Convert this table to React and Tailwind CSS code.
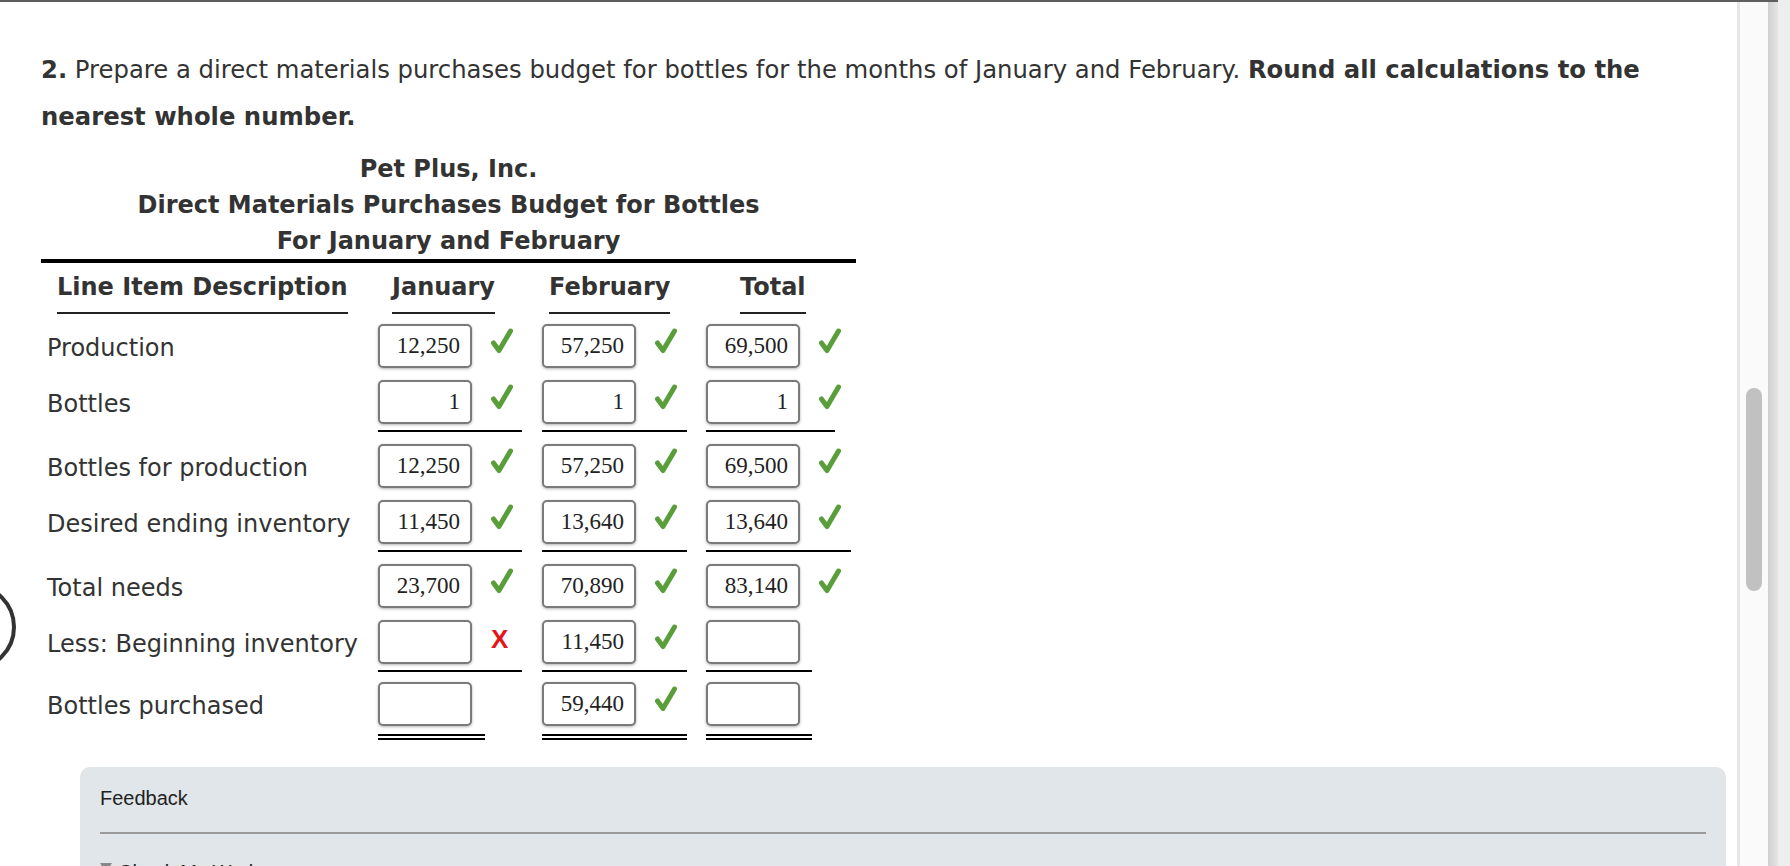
import React from 'react'

const rows = [
  { label: 'Production', vals: ['12,250', '57,250', '69,500'], marks: ['ok', 'ok', 'ok'] },
  { label: 'Bottles', vals: ['1', '1', '1'], marks: ['ok', 'ok', 'ok'], line: 'single', widths: [144, 145, 129] },
  { label: 'Bottles for production', vals: ['12,250', '57,250', '69,500'], marks: ['ok', 'ok', 'ok'] },
  { label: 'Desired ending inventory', vals: ['11,450', '13,640', '13,640'], marks: ['ok', 'ok', 'ok'], line: 'single', widths: [144, 145, 145] },
  { label: 'Total needs', vals: ['23,700', '70,890', '83,140'], marks: ['ok', 'ok', 'ok'] },
  { label: 'Less: Beginning inventory', vals: ['', '11,450', ''], marks: ['x', 'ok', null], line: 'single', widths: [144, 145, 106], tight: true },
  { label: 'Bottles purchased', vals: ['', '59,440', ''], marks: [null, 'ok', null], line: 'double', widths: [107, 145, 106] },
]

const cellW = ['w-[164px]', 'w-[164px]', 'w-[150px]']

const Check = () => (
  <svg width="22" height="26" viewBox="0 0 22 26" className="-mt-[10px]">
    <path d="M2.5 15 L8 22.5 L19.5 3" fill="none" stroke="#5a9e3a" strokeWidth="5" strokeLinecap="round" strokeLinejoin="round" />
  </svg>
)

const Cross = () => (
  <span className="-mt-[6px] text-[26px] leading-none font-bold text-[#e3161c] font-['Liberation_Sans',Arial,sans-serif]">X</span>
)

const Cell = ({ value, mark, i }) => (
  <div className={`${cellW[i]} flex items-center`}>
    <div className="w-[94px] h-[44px] rounded-[5px] border-2 border-[#7a7a7a] bg-white shadow-[0_1px_3px_rgba(0,0,0,0.3)] flex items-center justify-end pr-[10px] text-[23px] text-[#222] font-['Liberation_Serif','Times_New_Roman',serif]">
      {value}
    </div>
    <div className="ml-[19px] flex items-center">
      {mark === 'ok' && <Check />}
      {mark === 'x' && <Cross />}
    </div>
  </div>
)

const App = () => {
  return (
    <div className="w-[1790px] h-[866px] overflow-hidden flex flex-col bg-[#eeeeee] font-['DejaVu_Sans',Verdana,sans-serif]">
      {/* top edge */}
      <div className="flex h-[2px] shrink-0">
        <div className="w-[1778px] bg-[#5e5e5e]" />
        <div className="flex-1 bg-[#eeeeee]" />
      </div>

      <div className="flex flex-1 min-h-0">
        {/* page */}
        <div className="w-[1737px] bg-white relative flex flex-col">
          <div className="w-[455px] h-[10px] bg-gradient-to-b from-[#dcdcdc] to-white" />

          {/* question */}
          <p className="mt-[44px] pl-[41px] text-[24.3px] leading-[47px] text-[#333] whitespace-nowrap">
            <b>2.</b> Prepare a direct materials purchases budget for bottles for the months of January and February. <b>Round all calculations to the</b>
            <br />
            <b>nearest whole number.</b>
          </p>

          {/* title */}
          <div className="ml-[41px] w-[815px] mt-[11px]">
            <div className="text-center font-bold text-[24px] leading-[36px] text-[#333]">
              <div>Pet Plus, Inc.</div>
              <div>Direct Materials Purchases Budget for Bottles</div>
              <div>For January and February</div>
            </div>
            <div className="h-[4px] bg-black" />

            {/* header */}
            <div className="flex mt-[12px] text-[24px] leading-[24px] font-bold text-[#333]">
              <div className="w-[337px]">
                <span className="ml-[16px] inline-block pb-[13px] border-b-2 border-[#222]">Line Item Description</span>
              </div>
              <div className="w-[164px]">
                <span className="ml-[14px] inline-block pb-[13px] border-b-2 border-[#222]">January</span>
              </div>
              <div className="w-[164px]">
                <span className="ml-[7px] inline-block pb-[13px] border-b-2 border-[#222]">February</span>
              </div>
              <div className="w-[150px]">
                <span className="ml-[34px] inline-block pb-[13px] border-b-2 border-[#222]">Total</span>
              </div>
            </div>

            {/* rows */}
            <div className="mt-[10px] flex flex-col">
              {rows.map((r) => (
                <div key={r.label}>
                  <div className="flex items-center h-[44px]">
                    <div className="w-[337px] pl-[6px] pt-[4px] text-[24px] text-[#333] whitespace-nowrap">{r.label}</div>
                    {r.vals.map((v, i) => (
                      <Cell key={i} value={v} mark={r.marks[i]} i={i} />
                    ))}
                  </div>
                  {r.line === 'single' && (
                    <div className={`flex mt-[6px] ${r.tight ? 'mb-[10px]' : 'mb-[12px]'}`}>
                      <div className="w-[337px]" />
                      {r.widths.map((w, i) => (
                        <div key={i} className={cellW[i]}>
                          <div className="h-[2px] bg-black" style={{ width: w }} />
                        </div>
                      ))}
                    </div>
                  )}
                  {r.line === 'double' && (
                    <div className="flex mt-[8px]">
                      <div className="w-[337px]" />
                      {r.widths.map((w, i) => (
                        <div key={i} className={cellW[i]}>
                          <div className="h-[6px] border-y-2 border-black" style={{ width: w }} />
                        </div>
                      ))}
                    </div>
                  )}
                  {!r.line && <div className="h-[12px]" />}
                </div>
              ))}
            </div>
          </div>

          {/* feedback */}
          <div className="ml-[80px] mr-[11px] mt-[27px] flex-1 bg-[#e1e6ea] rounded-t-[10px] px-[20px] pt-[20px] font-['Liberation_Sans',Arial,sans-serif] text-[#222]">
            <div className="text-[20px] leading-[23px]">Feedback</div>
            <div className="mt-[22px] h-[2px] bg-[#9a9a9a]" />
            <div className="mt-[27px] flex items-start gap-[6px] text-[20px] leading-[23px]">
              <span className="mt-[2px] w-0 h-0 border-l-[6px] border-r-[6px] border-t-[10px] border-l-transparent border-r-transparent border-t-[#888]" />
              <span>Check My Work</span>
            </div>
          </div>

          {/* floating round button at the left edge */}
          <div className="absolute left-[-72px] top-[581px] w-[88px] h-[88px] rounded-full border-[4px] border-[#333]" />
        </div>

        {/* scrollbar */}
        <div className="w-[3px] bg-[#e6e6e6]" />
        <div className="w-[28px] bg-[#fafafa] flex justify-center">
          <div className="mt-[386px] w-[16px] h-[203px] rounded-full bg-[#c1c1c1]" />
        </div>
        <div className="w-[10px] bg-gradient-to-r from-[#d0d0d0] to-[#e6e6e6]" />
        <div className="w-[12px] bg-[#eeeeee]" />
      </div>
    </div>
  )
}

export default App
